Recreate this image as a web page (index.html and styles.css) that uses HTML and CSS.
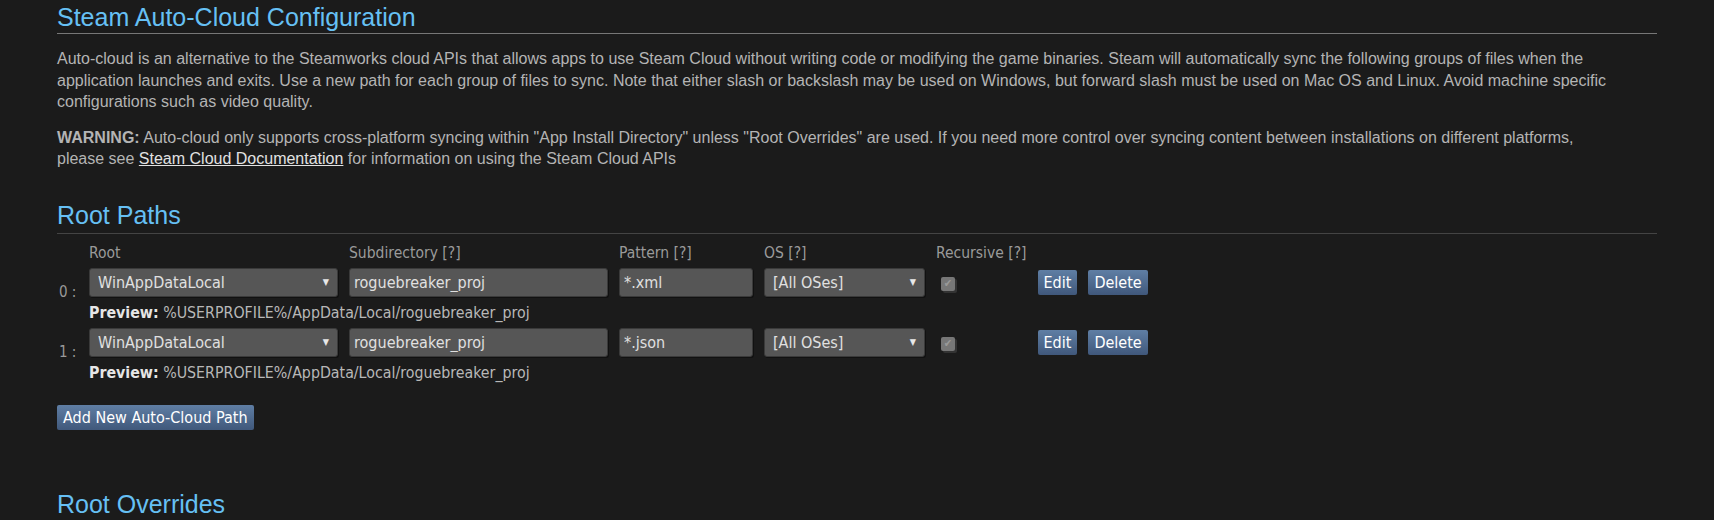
FILE: index.html
```html
<!DOCTYPE html>
<html lang="en">
<head>
    <meta charset="UTF-8">
    <meta name="viewport" content="width=device-width, initial-scale=1.0">
    <title>Steam Auto-Cloud Configuration</title>
    <link rel="stylesheet" href="styles.css">
</head>
<body>
    <div class="container">
        <h1 class="section first">Steam Auto-Cloud Configuration</h1>
        <p>Auto-cloud is an alternative to the Steamworks cloud APIs that allows apps to use Steam Cloud without writing code or modifying the game binaries. Steam will automatically sync the following groups of files when the application launches and exits. Use a new path for each group of files to sync. Note that either slash or backslash may be used on Windows, but forward slash must be used on Mac OS and Linux. Avoid machine specific configurations such as video quality.</p>
        <p class="warning"><b>WARNING:</b> Auto-cloud only supports cross-platform syncing within "App Install Directory" unless "Root Overrides" are used. If you need more control over syncing content between installations on different platforms, please see <a href="#">Steam Cloud Documentation</a> for information on using the Steam Cloud APIs</p>

        <h2 class="section">Root Paths</h2>
        <table class="paths">
            <tr class="head">
                <th class="idx"></th>
                <th>Root</th>
                <th>Subdirectory [?]</th>
                <th>Pattern [?]</th>
                <th>OS [?]</th>
                <th class="rec">Recursive [?]</th>
                <th></th>
                <th></th>
            </tr>
            <tr class="entry">
                <td class="idx" rowspan="2">0 :</td>
                <td><span class="select root"><select><option>WinAppDataLocal</option></select></span></td>
                <td><input class="field sub" type="text" value="roguebreaker_proj"></td>
                <td><input class="field pattern" type="text" value="*.xml"></td>
                <td><span class="select os"><select><option>[All OSes]</option></select></span></td>
                <td><span class="check">&#10004;</span></td>
                <td><button class="btn">Edit</button></td>
                <td><button class="btn">Delete</button></td>
            </tr>
            <tr>
                <td class="preview" colspan="7"><b>Preview:</b> %USERPROFILE%/AppData/Local/roguebreaker_proj</td>
            </tr>
            <tr class="entry">
                <td class="idx" rowspan="2">1 :</td>
                <td><span class="select root"><select><option>WinAppDataLocal</option></select></span></td>
                <td><input class="field sub" type="text" value="roguebreaker_proj"></td>
                <td><input class="field pattern" type="text" value="*.json"></td>
                <td><span class="select os"><select><option>[All OSes]</option></select></span></td>
                <td><span class="check">&#10004;</span></td>
                <td><button class="btn">Edit</button></td>
                <td><button class="btn">Delete</button></td>
            </tr>
            <tr>
                <td class="preview" colspan="7"><b>Preview:</b> %USERPROFILE%/AppData/Local/roguebreaker_proj</td>
            </tr>
        </table>
        <div class="actions">
            <button class="btn">Add New Auto-Cloud Path</button>
        </div>

        <h2 class="section">Root Overrides</h2>
    </div>
</body>
</html>
```

FILE: styles.css
```css
body {
    margin: 0;
    background: #1b1b1b;
    color: #b4b4b4;
    font-family: "Liberation Sans", Arial, sans-serif;
    font-size: 16px;
}
.container {
    max-width: 1600px;
    margin: 0 auto;
}
.section {
    color: #66c0f4;
    font-size: 25px;
    font-weight: normal;
    line-height: 28px;
    margin: 31px 0 0;
    padding-bottom: 4px;
    border-bottom: 1px solid #444;
}
.section.first {
    margin-top: 3px;
    padding-bottom: 2px;
    border-bottom-color: #777;
}
p {
    margin: 14px 0;
    padding-right: 10px;
    line-height: 21.6px;
}
p.warning {
    max-width: 1550px;
}
a {
    color: #e2e2e2;
}

.paths {
    margin-top: 10px;
    border-collapse: collapse;
    font-family: "DejaVu Sans Condensed", "DejaVu Sans", sans-serif;
    font-stretch: condensed;
}
.paths th {
    font-size: 15.5px;
    font-weight: normal;
    line-height: 18px;
    color: #9a9a9a;
    text-align: left;
    padding: 0 11px 0 0;
    white-space: nowrap;
}
.paths td {
    padding: 6.5px 11px 0 0;
    vertical-align: middle;
}
.paths .idx {
    width: 30px;
    padding: 0 0 0 2px;
    font-size: 15px;
    color: #999;
}
.paths th.rec {
    width: 90px;
}
.paths td.preview {
    padding: 5.5px 0 0;
    font-size: 15.8px;
    line-height: 19px;
    color: #b8b8b8;
    white-space: nowrap;
}
.preview b {
    color: #e6e6e6;
}

.field,
.select select {
    box-sizing: border-box;
    height: 29px;
    margin: 0;
    background: #565656;
    color: #e0e0e0;
    border: 1px solid #3a3a3a;
    border-radius: 3px;
    box-shadow: 1px 1px 0 #111;
    font-family: inherit;
    font-stretch: condensed;
    font-size: 16px;
    outline: none;
    vertical-align: middle;
}
.field {
    padding: 0 4px;
}
.field.sub {
    width: 259px;
}
.field.pattern {
    width: 134px;
}
.select {
    position: relative;
    display: inline-block;
    vertical-align: middle;
}
.select select {
    -webkit-appearance: none;
    appearance: none;
    width: 100%;
    padding: 0 8px;
}
.select::after {
    content: "\25BC";
    position: absolute;
    right: 9px;
    top: 9px;
    font-size: 9px;
    color: #e8e8e8;
    pointer-events: none;
}
.select.root {
    width: 249px;
}
.select.os {
    width: 161px;
}

.check {
    display: inline-block;
    width: 14px;
    height: 14px;
    margin-left: 5px;
    background: #777;
    border-radius: 2px;
    box-shadow: 2px 2px 0 #333;
    color: #999;
    font-size: 11px;
    line-height: 14px;
    text-align: center;
    vertical-align: middle;
}

.btn {
    height: 25px;
    padding: 0 6px;
    border: none;
    border-radius: 2px;
    background: linear-gradient(#5f7ea4, #40587b);
    color: #fff;
    font-family: "DejaVu Sans Condensed", "DejaVu Sans", sans-serif;
    font-stretch: condensed;
    font-size: 16px;
    vertical-align: middle;
    cursor: pointer;
}
.actions {
    margin: 23px 0 60px;
}
```
